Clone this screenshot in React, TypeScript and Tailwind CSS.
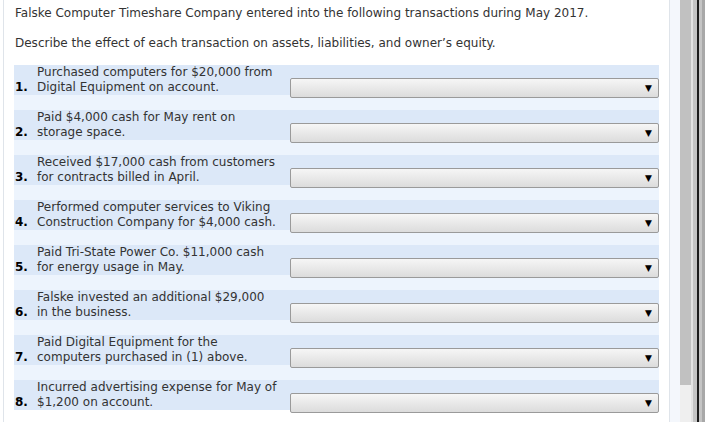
const rows = [
  ['Purchased computers for $20,000 from', 'Digital Equipment on account.'],
  ['Paid $4,000 cash for May rent on', 'storage space.'],
  ['Received $17,000 cash from customers', 'for contracts billed in April.'],
  ['Performed computer services to Viking', 'Construction Company for $4,000 cash.'],
  ['Paid Tri-State Power Co. $11,000 cash', 'for energy usage in May.'],
  ['Falske invested an additional $29,000', 'in the business.'],
  ['Paid Digital Equipment for the', 'computers purchased in (1) above.'],
  ['Incurred advertising expense for May of', '$1,200 on account.'],
]

const Select = () => (
  <div className="mt-[13px] flex h-[20px] w-[369px] items-center justify-end rounded-[2px] border border-[#9a9a9a] bg-gradient-to-b from-[#f6f6f6] to-[#dcdcdc] pr-[6px]">
    <span className="text-[9px] leading-none text-black">▼</span>
  </div>
)

export default function App() {
  return (
    <div
      className="flex h-[422px] w-[705px] overflow-hidden bg-white text-[12px] text-[#333]"
      style={{ fontFamily: '"DejaVu Sans", Verdana, sans-serif' }}
    >
      <div className="w-[3px] shrink-0" />
      <div className="w-[667px] shrink-0 border-x border-[#dfe4ea] pl-[10px] pr-[10px] pt-[6px]">
        <p className="pl-[1px] leading-[15px]">
          Falske Computer Timeshare Company entered into the following transactions during May 2017.
        </p>
        <p className="mt-[15px] pl-[1px] leading-[15px]">
          Describe the effect of each transaction on assets, liabilities, and owner’s equity.
        </p>
        <div className="mt-[14px] flex flex-col gap-[15px] bg-[#edf4fd]">
          {rows.map(([a, b], i) => (
            <div key={i} className="flex h-[30px] bg-[#dce8f8]">
              <div className="flex w-[23px] shrink-0 items-end pl-[1px] font-bold leading-[15px] text-black">
                {i + 1}.
              </div>
              <div className="w-[253px] shrink-0 leading-[15px]">
                <div>{a}</div>
                <div>{b}</div>
              </div>
              <Select />
            </div>
          ))}
        </div>
      </div>
      <div className="w-[10px] shrink-0 bg-[#f4f7fc]" />
      <div className="flex w-[11px] shrink-0 flex-col bg-[#efefef]">
        <div className="h-[385px] bg-[#c1c1c1]" />
      </div>
      <div className="w-[2px] shrink-0 bg-[#e3e3e3]" />
      <div className="w-[4px] shrink-0 bg-[#c4c4c4]" />
      <div className="w-[2px] shrink-0 bg-[#1c1c1c]" />
      <div className="w-[3px] shrink-0 bg-[#c4c4c4]" />
      <div className="w-[3px] shrink-0 bg-[#a8a8a8]" />
    </div>
  )
}
